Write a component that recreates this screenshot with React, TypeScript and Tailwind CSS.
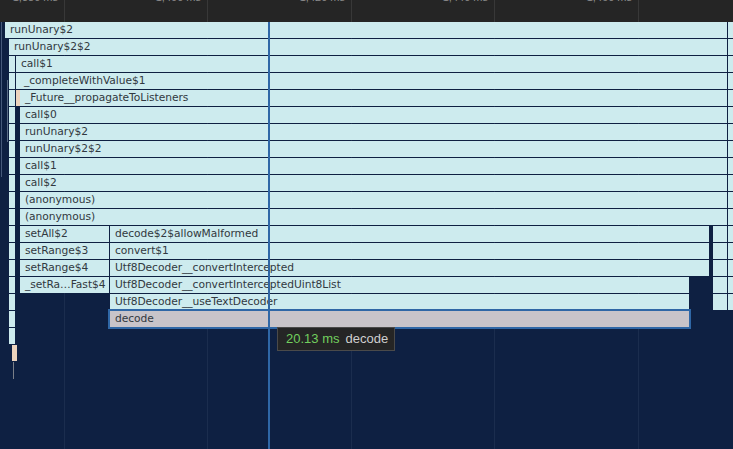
import React from "react";

// flame chart: one frame is [x, x2) in canvas pixels, rows stack top to bottom
type Frame = {
  x: number;
  x2: number;
  label?: string;
  tone?: "cyan" | "beige" | "sel";
};

const stackLabels = [
  "call$0",
  "runUnary$2",
  "runUnary$2$2",
  "call$1",
  "call$2",
  "(anonymous)",
  "(anonymous)",
];

const rows: Frame[][] = [
  [{ x: 5, x2: 727, label: "runUnary$2" }],
  [{ x: 9, x2: 727, label: "runUnary$2$2" }],
  [{ x: 16, x2: 727, label: "call$1" }],
  [
    { x: 16, x2: 18 },
    { x: 19, x2: 727, label: "_completeWithValue$1" },
  ],
  [
    { x: 16, x2: 19, tone: "beige" },
    { x: 20, x2: 727, label: "_Future__propagateToListeners" },
  ],
  ...stackLabels.map((label) => [{ x: 20, x2: 727, label }]),
  [
    { x: 20, x2: 109, label: "setAll$2" },
    { x: 110, x2: 709, label: "decode$2$allowMalformed" },
  ],
  [
    { x: 20, x2: 109, label: "setRange$3" },
    { x: 110, x2: 709, label: "convert$1" },
  ],
  [
    { x: 20, x2: 109, label: "setRange$4" },
    { x: 110, x2: 709, label: "Utf8Decoder__convertIntercepted" },
  ],
  [
    { x: 20, x2: 109, label: "_setRa…Fast$4" },
    { x: 110, x2: 689, label: "Utf8Decoder__convertInterceptedUint8List" },
  ],
  [{ x: 110, x2: 689, label: "Utf8Decoder__useTextDecoder" }],
  [{ x: 110, x2: 689, label: "decode", tone: "sel" }],
  [],
  [{ x: 12, x2: 16, tone: "beige" }],
];

// narrow strips on the left and right edges
rows.forEach((row, r) => {
  if (r >= 2 && r < 19) row.push({ x: 9, x2: 15 });
  if (r >= 12 && r < 17) row.push({ x: 713, x2: 727 });
  if (r < 17) row.push({ x: 728, x2: 733 });
});

const grid = [64, 207, 351, 494, 638];
const ticks = ["1,380 ms", "1,400 ms", "1,420 ms", "1,440 ms", "1,460 ms"];

const font = { fontFamily: '"DejaVu Sans", Verdana, sans-serif' };

function FlameFrame({ f }: { f: Frame }) {
  const tone =
    f.tone === "beige"
      ? "bg-[#ecd3bd]"
      : f.tone === "sel"
        ? "bg-[#c8c4c9] outline-2 outline-[#2f67a6] z-10"
        : "bg-[#cdebee]";
  return (
    <div
      className={`absolute top-0 h-full overflow-hidden whitespace-nowrap pl-[5px] text-[10.7px] leading-[16px] tracking-[-0.05px] text-[#313840] ${tone}`}
      style={{ left: f.x, width: f.x2 - f.x, ...font }}
    >
      {f.label}
    </div>
  );
}

export default function App() {
  return (
    <div className="flex h-[449px] w-[733px] flex-col overflow-hidden bg-[#0e2042]">
      {/* time ruler, labels scrolled up out of view */}
      <div className="relative h-[22px] shrink-0 overflow-hidden bg-[#252525]">
        {grid.map((g, i) => (
          <React.Fragment key={g}>
            <div className="absolute top-0 h-full w-px bg-[#383838]" style={{ left: g }} />
            <span
              className="absolute -top-[11px] text-[11px] text-[#8c8c8c]"
              style={{ right: 733 - g + 6, fontFamily: '"Liberation Sans", Arial, sans-serif' }}
            >
              {ticks[i]}
            </span>
          </React.Fragment>
        ))}
      </div>

      {/* flame chart canvas */}
      <div className="relative flex-1">
        {grid.map((g) => (
          <div key={g} className="absolute top-0 h-full w-px bg-[#1b2d4e]" style={{ left: g }} />
        ))}
        <div className="absolute left-[1px] top-0 h-[155px] w-px bg-[#46597a]" />
        <div className="absolute left-[7px] top-[58px] h-[62px] w-px bg-[#5a6c86]" />

        <div className="relative flex flex-col gap-px">
          {rows.map((row, r) => (
            <div key={r} className="relative h-[16px]">
              {row.map((f, i) => (
                <FlameFrame key={i} f={f} />
              ))}
            </div>
          ))}
          <div className="ml-[13px] h-[17px] w-px bg-[#7a7f88]" />
        </div>

        {/* cursor line */}
        <div className="absolute left-[268px] top-0 z-20 h-full w-[2px] bg-[#2f67a6]" />

        {/* hover tooltip */}
        <div
          className="absolute left-[277px] top-[305px] z-30 flex h-[24px] w-[118px] items-center border border-[#4a4a4a] bg-[#252525] pl-[8px] text-[13px]"
          style={{ fontFamily: '"Liberation Sans", Arial, sans-serif' }}
        >
          <span className="text-[#72cf5e]">20.13 ms</span>
          <span className="ml-[6px] text-[#cfcfcf]">decode</span>
        </div>
      </div>
    </div>
  );
}
